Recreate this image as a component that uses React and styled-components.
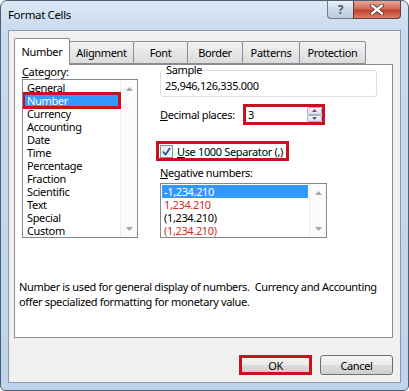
import React from "react";
import styled, { createGlobalStyle } from "styled-components";

const GlobalStyle = createGlobalStyle`
  html, body { margin: 0; padding: 0; background: #fff; }
  body {
    font-family: "Noto Sans", "Open Sans", sans-serif;
    font-size: 11px;
    letter-spacing: -0.35px;
    color: #000;
  }
  * { box-sizing: border-box; }
`;

const RED = "#c8121f";

const Window = styled.div`
  width: 409px;
  height: 391px;
  border: 1px solid #4f5f72;
  border-radius: 7px 7px 5px 5px;
  background: linear-gradient(#dce8f5 0, #c9dbef 30px, #bed3ec 100%);
  padding: 0 7px 7px 7px;
  display: flex;
  flex-direction: column;
`;

const TitleBar = styled.div`
  height: 29px;
  display: flex;
  align-items: flex-start;
`;

const Title = styled.div`
  line-height: 28px;
  font-size: 11.5px;
`;

const Controls = styled.div`
  margin-left: auto;
  display: flex;
`;

const HelpButton = styled.div`
  width: 26px;
  height: 18px;
  border: 1px solid #6c7b8e;
  border-top: none;
  border-right: none;
  border-radius: 0 0 0 4px;
  background: linear-gradient(#eaf1f9, #cdd9e7 50%, #bccbde);
  color: #4c5968;
  font-size: 12px;
  font-weight: bold;
  display: flex;
  align-items: center;
  justify-content: center;
`;

const CloseButton = styled.div`
  width: 48px;
  height: 18px;
  border: 1px solid #6b3b35;
  border-top: none;
  border-radius: 0 0 4px 0;
  background: linear-gradient(#e9a997, #d26a55 45%, #c2432c 55%, #d9806c);
  display: flex;
  align-items: center;
  justify-content: center;
`;

const Client = styled.div`
  flex: 1;
  background: #f0f0f0;
  border: 1px solid #8a9bb0;
  padding: 7px 7px 0 5px;
  display: flex;
  flex-direction: column;
`;

const TabStrip = styled.div`
  height: 26px;
  display: flex;
  align-items: flex-end;
  position: relative;
  z-index: 1;
`;

const Tab = styled.div`
  width: ${(p) => p.$w}px;
  height: ${(p) => (p.$active ? 27 : 23)}px;
  margin-left: ${(p) => (p.$first ? 0 : -1)}px;
  margin-bottom: ${(p) => (p.$active ? -1 : 0)}px;
  border: 1px solid #898c95;
  border-bottom: ${(p) => (p.$active ? "none" : "1px solid #898c95")};
  border-radius: 2px 2px 0 0;
  background: ${(p) =>
    p.$active ? "#fff" : "linear-gradient(#f3f3f3, #e6e6e6 50%, #dcdcdc)"};
  display: flex;
  align-items: center;
  justify-content: center;
  padding-bottom: ${(p) => (p.$active ? 2 : 0)}px;
  position: relative;
  z-index: ${(p) => (p.$active ? 2 : 1)};
`;

const Panel = styled.div`
  height: 274px;
  border: 1px solid #898c95;
  background: #fff;
  padding: 0 7px 0 4px;
  display: flex;
  flex-direction: column;
`;

const Columns = styled.div`
  display: flex;
  gap: 22px;
  padding-left: 3px;
`;

const LeftCol = styled.div`
  width: 116px;
  display: flex;
  flex-direction: column;
`;

const RightCol = styled.div`
  width: 217px;
  display: flex;
  flex-direction: column;
`;

const Label = styled.div`
  line-height: 14px;
  height: 14px;
  margin-top: ${(p) => p.$mt || 0}px;
  white-space: nowrap;
`;

const ListBox = styled.div`
  width: ${(p) => (p.$w ? `${p.$w}px` : "auto")};
  height: ${(p) => p.$h}px;
  margin-top: ${(p) => p.$mt || 0}px;
  border: 1px solid #828790;
  display: flex;
  background: #fff;
  overflow: hidden;
`;

const Items = styled.div`
  flex: 1;
  padding: ${(p) => p.$pt ?? 1}px 1px 0 1px;
`;

const Item = styled.div`
  height: 13px;
  line-height: 13px;
  padding-left: ${(p) => p.$pl || 3}px;
  white-space: nowrap;
  color: ${(p) => (p.$selected ? "#fff" : p.$red ? "#d42a2a" : "#000")};
  background: ${(p) => (p.$selected ? "#3399ff" : "transparent")};
  outline: ${(p) => (p.$marked ? `3px solid ${RED}` : "none")};
  outline-offset: -1px;
  position: relative;
`;

const ScrollBar = styled.div`
  width: 17px;
  display: flex;
  flex-direction: column;
  justify-content: space-between;
  background: #fbfbfb;
  border-left: 1px solid #ededed;
`;

const ScrollArrow = styled.div`
  height: 17px;
  display: flex;
  align-items: center;
  justify-content: center;
`;

const Fieldset = styled.fieldset`
  margin: 0;
  height: 32px;
  padding: 0 4px 2px 4px;
  border: 1px solid #d5dfe5;
  border-radius: 3px;
`;

const Legend = styled.legend`
  padding: 0 1px;
  line-height: 10px;
  height: 10px;
`;

const SampleValue = styled.div`
  line-height: 15px;
  margin-top: 3px;
`;

const Row = styled.div`
  display: flex;
  align-items: center;
  margin-top: ${(p) => p.$mt || 0}px;
`;

const RowLabel = styled.div`
  width: 83px;
  white-space: nowrap;
`;

const SpinBox = styled.div`
  width: 82px;
  height: 21px;
  border: 3px solid ${RED};
  background: #fff;
  display: flex;
  align-items: center;
  padding-left: 2px;
`;

const SpinValue = styled.div`
  flex: 1;
  line-height: 15px;
`;

const SpinButtons = styled.div`
  width: 15px;
  height: 15px;
  display: flex;
  flex-direction: column;
`;

const SpinButton = styled.div`
  flex: 1;
  border: 1px solid #a9b3c0;
  border-radius: 2px;
  background: linear-gradient(#f6f8fa, #dde3ea);
  display: flex;
  align-items: center;
  justify-content: center;
`;

const CheckRow = styled.div`
  margin-top: 16px;
  margin-left: -4px;
  width: 133px;
  height: 20px;
  border: 3px solid ${RED};
  display: flex;
  align-items: center;
  padding-left: 1px;
  gap: 4px;
  white-space: nowrap;
`;

const CheckBox = styled.div`
  width: 13px;
  height: 13px;
  flex: none;
  border: 1px solid #8e8f8f;
  background: linear-gradient(135deg, #dfe9f5, #f6f9fd);
  display: flex;
  align-items: center;
  justify-content: center;
`;

const Description = styled.div`
  margin-top: 41px;
  line-height: 15px;
  width: 372px;
`;

const ButtonRow = styled.div`
  display: flex;
  justify-content: flex-end;
  gap: 8px;
  margin-top: 17px;
`;

const Button = styled.div`
  width: ${(p) => p.$w}px;
  height: 20px;
  border: ${(p) => (p.$marked ? `3px solid ${RED}` : "1px solid #707070")};
  border-radius: ${(p) => (p.$marked ? 0 : 3)}px;
  background: linear-gradient(#f4f4f4, #ebebeb 50%, #dddddd 51%, #cfcfcf);
  display: flex;
  align-items: center;
  justify-content: center;
`;

const U = styled.span`
  text-decoration: underline;
`;

const Arrow = ({ up, color = "#a8a8a8", w = 7, h = 4 }) => (
  <svg width={w} height={h} viewBox="0 0 7 4">
    <path d={up ? "M0 4 L3.5 0 L7 4 Z" : "M0 0 L3.5 4 L7 0 Z"} fill={color} />
  </svg>
);

const categories = [
  "General",
  "Number",
  "Currency",
  "Accounting",
  "Date",
  "Time",
  "Percentage",
  "Fraction",
  "Scientific",
  "Text",
  "Special",
  "Custom",
];

const negatives = [
  { text: "-1,234.210", selected: true },
  { text: "1,234.210", red: true },
  { text: "(1,234.210)" },
  { text: "(1,234.210)", red: true },
];

const tabs = [
  { name: "Number", w: 56 },
  { name: "Alignment", w: 65 },
  { name: "Font", w: 55 },
  { name: "Border", w: 56 },
  { name: "Patterns", w: 58 },
  { name: "Protection", w: 67 },
];

function Scroller() {
  return (
    <ScrollBar>
      <ScrollArrow>
        <Arrow up />
      </ScrollArrow>
      <ScrollArrow>
        <Arrow />
      </ScrollArrow>
    </ScrollBar>
  );
}

export default function App() {
  return (
    <>
      <GlobalStyle />
      <Window>
        <TitleBar>
          <Title>Format Cells</Title>
          <Controls>
            <HelpButton>?</HelpButton>
            <CloseButton>
              <svg width="14" height="11" viewBox="0 0 14 11">
                <path
                  d="M2 1.5 L12 9.5 M12 1.5 L2 9.5"
                  stroke="#5a2620"
                  strokeWidth="4"
                  strokeLinecap="round"
                />
                <path
                  d="M2 1.5 L12 9.5 M12 1.5 L2 9.5"
                  stroke="#fff"
                  strokeWidth="2.4"
                  strokeLinecap="round"
                />
              </svg>
            </CloseButton>
          </Controls>
        </TitleBar>
        <Client>
          <TabStrip>
            {tabs.map((t, i) => (
              <Tab key={t.name} $w={t.w} $first={i === 0} $active={i === 0}>
                {t.name}
              </Tab>
            ))}
          </TabStrip>
          <Panel>
            <Columns>
              <LeftCol>
                <Label>
                  <U>C</U>ategory:
                </Label>
                <ListBox $h={159}>
                  <Items>
                    {categories.map((c) => (
                      <Item
                        key={c}
                        $selected={c === "Number"}
                        $marked={c === "Number"}
                      >
                        {c}
                      </Item>
                    ))}
                  </Items>
                  <Scroller />
                </ListBox>
              </LeftCol>
              <RightCol>
                <Fieldset>
                  <Legend>Sample</Legend>
                  <SampleValue>25,946,126,335.000</SampleValue>
                </Fieldset>
                <Row $mt={7}>
                  <RowLabel>
                    <U>D</U>ecimal places:
                  </RowLabel>
                  <SpinBox>
                    <SpinValue>3</SpinValue>
                    <SpinButtons>
                      <SpinButton>
                        <Arrow up color="#4d6185" w={5} h={3} />
                      </SpinButton>
                      <SpinButton>
                        <Arrow color="#4d6185" w={5} h={3} />
                      </SpinButton>
                    </SpinButtons>
                  </SpinBox>
                </Row>
                <CheckRow>
                  <CheckBox>
                    <svg width="9" height="9" viewBox="0 0 9 9">
                      <path
                        d="M1 4.5 L3.5 7.5 L8 1"
                        stroke="#3c528a"
                        strokeWidth="1.8"
                        fill="none"
                      />
                    </svg>
                  </CheckBox>
                  <span>
                    <U>U</U>se 1000 Separator (,)
                  </span>
                </CheckRow>
                <Label $mt={5}>
                  <U>N</U>egative numbers:
                </Label>
                <ListBox $h={55} $w={167} $mt={3}>
                  <Items $pt={1}>
                    {negatives.map((n, i) => (
                      <Item
                        key={i}
                        $pl={2}
                        $selected={n.selected}
                        $red={n.red}
                      >
                        {n.text}
                      </Item>
                    ))}
                  </Items>
                  <Scroller />
                </ListBox>
              </RightCol>
            </Columns>
            <Description>
              Number is used for general display of numbers.&nbsp; Currency and
              Accounting offer specialized formatting for monetary value.
            </Description>
          </Panel>
          <ButtonRow>
            <Button $w={73} $marked>
              OK
            </Button>
            <Button $w={73}>Cancel</Button>
          </ButtonRow>
        </Client>
      </Window>
    </>
  );
}
